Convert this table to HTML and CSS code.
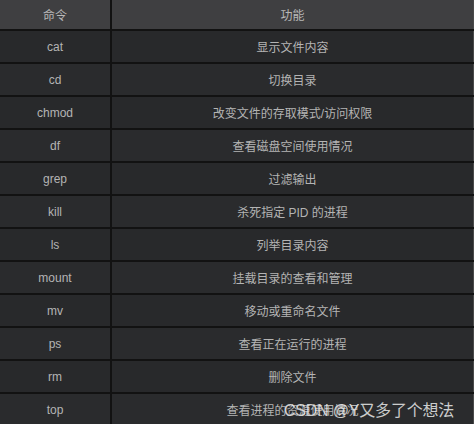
FILE: index.html
```html
<!DOCTYPE html>
<html lang="zh">
<head>
<meta charset="utf-8">
<link rel="stylesheet" href="styles.css">
</head>
<body>
<div class="wrap">
<table class="cmds">
<thead>
<tr><th class="c1">命令</th><th class="c2">功能</th></tr>
</thead>
<tbody>
<tr><td>cat</td><td>显示文件内容</td></tr>
<tr><td>cd</td><td>切换目录</td></tr>
<tr><td>chmod</td><td>改变文件的存取模式/访问权限</td></tr>
<tr><td>df</td><td>查看磁盘空间使用情况</td></tr>
<tr><td>grep</td><td>过滤输出</td></tr>
<tr><td>kill</td><td>杀死指定 PID 的进程</td></tr>
<tr><td>ls</td><td>列举目录内容</td></tr>
<tr><td>mount</td><td>挂载目录的查看和管理</td></tr>
<tr><td>mv</td><td>移动或重命名文件</td></tr>
<tr><td>ps</td><td>查看正在运行的进程</td></tr>
<tr><td>rm</td><td>删除文件</td></tr>
<tr><td>top</td><td>查看进程的资源使用情况</td></tr>
</tbody>
</table>
<div class="mark">CSDN @Y又多了个想法</div>
</div>
</body>
</html>
```
FILE: styles.css
```css
html, body {
  margin: 0;
  padding: 0;
  background: #27282a;
}
.wrap {
  position: relative;
  width: 474px;
  height: 424px;
  overflow: hidden;
}
.cmds {
  width: 474px;
  border-collapse: collapse;
  table-layout: fixed;
  font-family: "Liberation Sans", "Noto Sans CJK SC", sans-serif;
  font-size: 12px;
  color: #b4b4b4;
}
.cmds th, .cmds td {
  text-align: center;
  padding: 0;
  border-bottom: 2px solid #121212;
  border-right: 2px solid #121212;
}
.cmds th:last-child, .cmds td:last-child {
  border-right: 1px solid #4a4a4a;
}
.cmds th {
  height: 29px;
  background: #3f3f41;
  font-weight: normal;
  color: #b8b8b8;
}
.cmds td {
  height: 31px;
  background: #28292b;
}
.cmds tbody tr:nth-child(even) td {
  background: #2a2b2d;
}
.c1 { width: 110px; }
.mark {
  position: absolute;
  left: 284px;
  top: 397px;
  font-family: "Liberation Sans", "Noto Sans CJK SC", sans-serif;
  font-size: 16px;
  letter-spacing: -0.2px;
  color: rgba(235, 235, 235, 0.85);
  white-space: nowrap;
}
```
